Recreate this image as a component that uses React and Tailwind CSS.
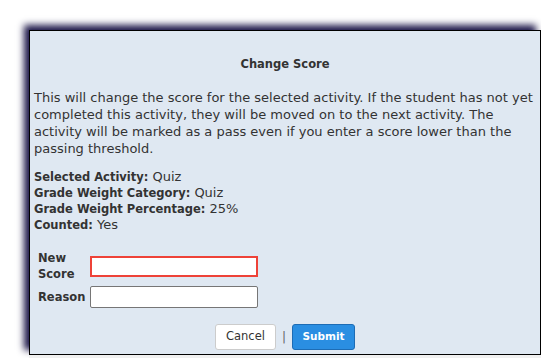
import React from "react";

export default function App() {
  const font = { fontFamily: '"DejaVu Sans", Verdana, sans-serif' };
  return (
    <div className="w-[541px] h-[358px] bg-white overflow-hidden pt-[30px] pl-[29px]" style={font}>
      <div className="h-[325px] w-[512px] bg-[#dfe8f2] border border-black shadow-[-5px_-5px_7px_#1c1648] text-[#333] text-[13px] px-[4px]">
        <div className="pt-[25px] text-center font-bold text-[11.5px] leading-[17px]">Change Score</div>
        <p className="mt-[16px] leading-[17px] whitespace-nowrap">
          This will change the score for the selected activity. If the student has not yet
          <br />
          completed this activity, they will be moved on to the next activity. The
          <br />
          activity will be marked as a pass even if you enter a score lower than the
          <br />
          passing threshold.
        </p>
        <div className="mt-[12px] leading-[16px]">
          <div><span className="font-bold text-[11.5px]">Selected Activity:</span> Quiz</div>
          <div><span className="font-bold text-[11.5px]">Grade Weight Category:</span> Quiz</div>
          <div><span className="font-bold text-[11.5px]">Grade Weight Percentage:</span> 25%</div>
          <div><span className="font-bold text-[11.5px]">Counted:</span> Yes</div>
        </div>
        <div className="mt-[17px] pl-[4px] flex flex-col gap-[4px]">
          <div className="flex items-center">
            <div className="w-[52px] font-bold text-[11.5px] leading-[16px]">New<br />Score</div>
            <div className="w-[168px] h-[21px] bg-white border-2 border-[#ee4238]" />
          </div>
          <div className="flex items-center">
            <div className="w-[52px] font-bold text-[11.5px] leading-[16px]">Reason</div>
            <div className="w-[168px] h-[22px] bg-white border border-[#767676] rounded-[2px]" />
          </div>
        </div>
        <div className="mt-[16px] flex justify-center items-center gap-[6px]">
          <button className="h-[26px] w-[61px] bg-white border border-[#cccccc] rounded-[3px] text-[11.5px] text-[#333]">Cancel</button>
          <span className="text-[#666] text-[12px]">|</span>
          <button className="h-[26px] w-[63px] bg-[#2a8ee2] border border-[#1d6cb5] rounded-[3px] text-[10.5px] text-white font-bold">Submit</button>
        </div>
      </div>
      <div className="h-[3px] bg-[#f0f0f0]" />
    </div>
  );
}
